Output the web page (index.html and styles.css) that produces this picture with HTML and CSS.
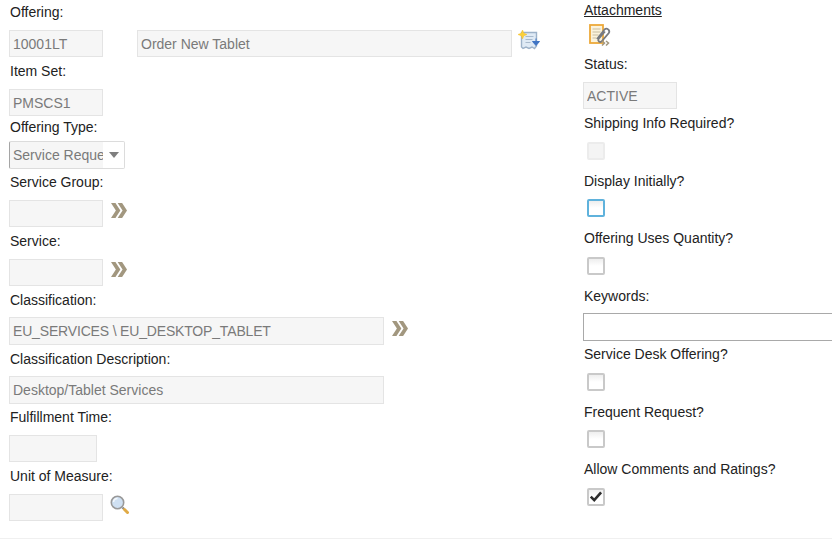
FILE: index.html
```html
<!DOCTYPE html>
<html lang="en">
<head>
<meta charset="utf-8">
<title>Offering</title>
<link rel="stylesheet" href="styles.css">
</head>
<body>
<main class="page">
  <section class="col-left">
    <div class="field first">
      <div class="label">Offering:</div>
      <div class="row">
        <input class="box w94" value="10001LT" readonly>
        <input class="box w375 ml34" value="Order New Tablet" readonly>
        <svg class="ic-new" width="23" height="20" viewBox="0 0 23 20">
          <path d="M3.500 2.500h15v13.500l-2 2.500-2.500-1.500-3 1.500-3-1.500-3 1.500-1.500-1.500z" fill="#dfeaf5" stroke="#9db2c9" stroke-width="1.400"/>
          <path d="M7.500 6.500h8M7.500 9.500h7M7.500 12.500h5" stroke="#a8bacd" fill="none"/>
          <path d="M4.500 0l1.300 3.200 3.200 1.300-3.200 1.300-1.300 3.200-1.300-3.200L0 4.500l3.200-1.300z" fill="#fbd038" stroke="#f5be2a" stroke-width=".5"/>
          <path d="M18 8.500v4M14.500 11.500h7L18 15.500z" fill="#3f74c4" stroke="#3f74c4"/>
        </svg>
      </div>
    </div>
    <div class="field">
      <div class="label">Item Set:</div>
      <input class="box w94" value="PMSCS1" readonly>
    </div>
    <div class="field tight">
      <div class="label short">Offering Type:</div>
      <div class="select">
        <span class="select-text">Service Request</span>
        <span class="select-btn"><span class="caret"></span></span>
      </div>
    </div>
    <div class="field mid">
      <div class="label">Service Group:</div>
      <div class="row">
        <input class="box w94" readonly>
        <svg class="ic-go" width="16" height="15" viewBox="0 0 18 14" preserveAspectRatio="none"><path d="M0 0h5l5.500 7L5 14H0l5.500-7zM7.500 0h5L18 7l-5.500 7h-5L13 7z" fill="#a2977f"/></svg>
      </div>
    </div>
    <div class="field">
      <div class="label">Service:</div>
      <div class="row">
        <input class="box w94" readonly>
        <svg class="ic-go" width="16" height="15" viewBox="0 0 18 14" preserveAspectRatio="none"><path d="M0 0h5l5.500 7L5 14H0l5.500-7zM7.500 0h5L18 7l-5.500 7h-5L13 7z" fill="#a2977f"/></svg>
      </div>
    </div>
    <div class="field">
      <div class="label short">Classification:</div>
      <div class="row">
        <input class="box tall w375 condensed" value="EU_SERVICES \ EU_DESKTOP_TABLET" readonly>
        <svg class="ic-go low" width="16" height="15" viewBox="0 0 18 14" preserveAspectRatio="none"><path d="M0 0h5l5.500 7L5 14H0l5.500-7zM7.500 0h5L18 7l-5.500 7h-5L13 7z" fill="#a2977f"/></svg>
      </div>
    </div>
    <div class="field">
      <div class="label short">Classification Description:</div>
      <input class="box tall w375" value="Desktop/Tablet Services" readonly>
    </div>
    <div class="field mid">
      <div class="label">Fulfillment Time:</div>
      <input class="box w88" readonly>
    </div>
    <div class="field">
      <div class="label">Unit of Measure:</div>
      <div class="row">
        <input class="box w94" readonly>
        <svg class="ic-search" width="20" height="20" viewBox="0 0 20 20">
          <circle cx="7.500" cy="7.500" r="6.200" fill="#cfe0f2" stroke="#999" stroke-width="1.600"/>
          <path d="M3.500 7a4 4 0 0 1 4-3.500" stroke="#f4f8fc" stroke-width="1.500" fill="none"/>
          <path d="M12.500 12.500l1.500 1.500" stroke="#8a8a8a" stroke-width="2.400"/>
          <path d="M14.500 14.500l3 3" stroke="#e0aa45" stroke-width="3" stroke-linecap="round"/>
        </svg>
      </div>
    </div>
  </section>

  <section class="col-right">
    <a class="attach" href="#">Attachments</a>
    <svg class="ic-attach" width="23" height="22" viewBox="0 0 23 22">
      <rect x="1" y="1" width="13" height="18" fill="#fbf3dc" stroke="#eda93a" stroke-width="1.800"/>
      <path d="M3.500 5h8M3.500 8h8M3.500 11h6M3.500 14h4" stroke="#c9bda0" fill="none"/>
      <path d="M8 15l7.500-9.500a2.800 2.800 0 0 1 4.300 3.500l-7.300 8.500a2 2 0 0 1-3-2.500l6.500-7.500" stroke="#777a80" stroke-width="1.800" fill="none"/>
      <path d="M13 17l2.500 2-2.500 2.500M17 17l2.500 2-2.500 2.500" stroke="#a2977f" stroke-width="1.500" fill="none"/>
    </svg>
    <div class="field status">
      <div class="label">Status:</div>
      <input class="box w94" value="ACTIVE" readonly>
    </div>
    <div class="field cb-field ship">
      <div class="label">Shipping Info Required?</div>
      <span class="check disabled"></span>
    </div>
    <div class="field cb-field">
      <div class="label short">Display Initially?</div>
      <span class="check focus"></span>
    </div>
    <div class="field cb-field">
      <div class="label">Offering Uses Quantity?</div>
      <span class="check"></span>
    </div>
    <div class="field cb-field">
      <div class="label tiny">Keywords:</div>
      <input class="box tall keywords" readonly>
    </div>
    <div class="field cb-field narrow">
      <div class="label">Service Desk Offering?</div>
      <span class="check"></span>
    </div>
    <div class="field cb-field">
      <div class="label short">Frequent Request?</div>
      <span class="check"></span>
    </div>
    <div class="field cb-field">
      <div class="label">Allow Comments and Ratings?</div>
      <span class="check">
        <svg width="16" height="16" viewBox="0 0 16 16"><path d="M2 7.500l4 4L13.800 2.800" stroke="#2b2b2b" stroke-width="3" fill="none"/></svg>
      </span>
    </div>
  </section>
</main>
</body>
</html>
```

FILE: styles.css
```css
* {
  box-sizing: border-box;
}

html,
body {
  margin: 0;
  padding: 0;
  background: #fff;
  overflow: hidden;
}

body {
  font-family: "Liberation Sans", Arial, sans-serif;
  font-size: 14px;
  color: #222;
}

.page {
  display: flex;
  height: 539px;
  border-bottom: 1px solid #f0f0f0;
  overflow: hidden;
}

.col-left {
  width: 583px;
  padding-left: 9px;
  padding-top: 3px;
  flex: none;
}

.col-right {
  flex: 1;
  min-width: 0;
  padding-top: 1px;
  display: flex;
  flex-direction: column;
  align-items: flex-start;
}

.field {
  margin-top: 5px;
}

.field.first {
  margin-top: 0;
}

.field.tight {
  margin-top: 2px;
}

.field.mid {
  margin-top: 4px;
}

.label {
  height: 18px;
  line-height: 18px;
  margin-left: 1px;
  margin-bottom: 9px;
  white-space: nowrap;
}

.label.short {
  margin-bottom: 8px;
}

.field.tight .label.short {
  margin-bottom: 5px;
}

.row {
  display: flex;
  align-items: flex-start;
}

.box {
  display: block;
  height: 27px;
  padding: 0 3px;
  background: #f6f6f6;
  border: 1px solid #e4e4e4;
  font: 14px "Liberation Sans", Arial, sans-serif;
  color: #7a7a7a;
  outline: none;
  border-radius: 0;
}

.box.tall {
  height: 28px;
}

.condensed {
  letter-spacing: -0.17px;
}

.w94 {
  width: 94px;
}

.w88 {
  width: 88px;
}

.w375 {
  width: 375px;
}

.ml34 {
  margin-left: 34px;
}

.select {
  display: flex;
  width: 116px;
  height: 28px;
  background: #f6f6f6;
  border: 1px solid #dcdcdc;
  border-left-color: #a5a5a5;
  border-radius: 2px;
  overflow: hidden;
}

.select-text {
  width: 93px;
  padding-left: 3px;
  line-height: 26px;
  color: #7a7a7a;
  white-space: nowrap;
  overflow: hidden;
}

.select-btn {
  flex: 1;
  background: #fff;
  display: flex;
  align-items: center;
  justify-content: center;
}

.caret {
  width: 0;
  height: 0;
  border-left: 5px solid transparent;
  border-right: 5px solid transparent;
  border-top: 6px solid #7f7f7f;
}

.ic-new {
  margin-left: 6px;
  flex: none;
}

.ic-go {
  margin: 3px 0 0 8px;
  flex: none;
}

.ic-go.low {
  margin-top: 4px;
}

.ic-search {
  margin: 1px 0 0 7px;
  flex: none;
}

.attach {
  margin-left: 1px;
  height: 18px;
  line-height: 18px;
  color: #222;
  text-decoration: underline;
}

.ic-attach {
  display: block;
  margin: 5px 0 0 6px;
  flex: none;
}

.status {
  margin-top: 9px;
}

.cb-field {
  margin-top: 12px;
}

.cb-field.ship {
  margin-top: 5px;
}

.cb-field .label {
  margin-bottom: 10px;
}

.cb-field .label.short {
  margin-bottom: 9px;
}

.cb-field .label.tiny {
  margin-bottom: 8px;
}

.cb-field.narrow {
  margin-top: 4px;
}

.keywords {
  width: 260px;
  background: #fff;
  border-color: #a9a9a9;
}

.check {
  display: flex;
  align-items: center;
  justify-content: center;
  width: 18px;
  height: 18px;
  margin-left: 4px;
  border: 2px solid #c9c9c9;
  border-radius: 2px;
  background: linear-gradient(#eeeeee, #fff 50%);
}

.check.disabled {
  border-color: #ececec;
  background: #f4f4f4;
}

.check.focus {
  border-color: #5fb2dc;
}
```
